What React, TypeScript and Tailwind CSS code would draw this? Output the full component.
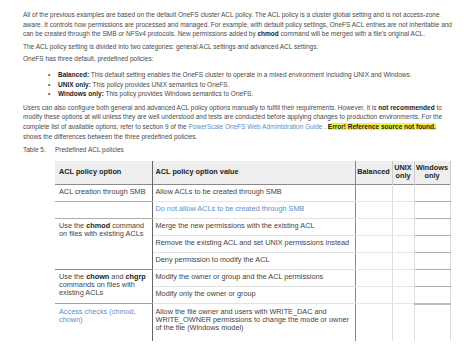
import React from "react";

const F = { fontFamily: '"Liberation Sans", Arial, sans-serif' };

function Cell({ children, className = "" }: { children?: React.ReactNode; className?: string }) {
  return <td className={`align-top p-0 ${className}`}>{children}</td>;
}

export default function App() {
  const sub = "h-[17px]";
  return (
    <div className="w-[474px] h-[355px] overflow-hidden bg-white text-[#4a4a4a]" style={F}>
      <div className="pl-[23px] pt-[10px] text-[6.5px] leading-[9.6px]">
        <p className="mb-[3px] whitespace-nowrap">
          All of the previous examples are based on the default OneFS cluster ACL policy. The ACL policy is a cluster global setting and is not access-zone
          <br />
          aware. It controls how permissions are processed and managed. For example, with default policy settings, OneFS ACL entries are not inheritable and
          <br />
          can be created through the SMB or NFSv4 protocols. New permissions added by <b className="text-[#222]">chmod</b> command will be merged with a file’s original ACL.
        </p>
        <p className="mb-[3px] whitespace-nowrap">
          The ACL policy setting is divided into two categories: general ACL settings and advanced ACL settings.
        </p>
        <p className="whitespace-nowrap">OneFS has three default, predefined policies:</p>
        <ul className="mt-[6px] mb-[4px] whitespace-nowrap">
          {[
            ["Balanced:", " This default setting enables the OneFS cluster to operate in a mixed environment including UNIX and Windows."],
            ["UNIX only:", " This policy provides UNIX semantics to OneFS."],
            ["Windows only:", " This policy provides Windows semantics to OneFS."],
          ].map(([b, t]) => (
            <li key={b} className="flex">
              <span className="w-[35px] pl-[25px] shrink-0">•</span>
              <span>
                <b className="text-[#222]">{b}</b>
                {t}
              </span>
            </li>
          ))}
        </ul>
        <p className="whitespace-nowrap">
          Users can also configure both general and advanced ACL policy options manually to fulfill their requirements. However, it is <b className="text-[#222]">not recommended</b> to
          <br />
          modify these options at will unless they are well understood and tests are conducted before applying changes to production environments. For the
          <br />
          complete list of available options, refer to section 9 of the <span className="text-[#5b8fc7]">PowerScale OneFS Web Administration Guide</span> .{" "}
          <b className="bg-[#eef53e] text-[#222]">Error! Reference source not found.</b>
          <br />
          shows the differences between the three predefined policies.
        </p>
        <div className="mt-[4px] flex whitespace-nowrap">
          <span className="w-[32px]">Table 5.</span>
          <span>Predefined ACL policies</span>
        </div>
      </div>

      <div className="pl-[55px] mt-[6px]">
        <table className="table-fixed border-collapse text-[7.3px] leading-[8px] text-[#444]" style={{ width: 395 }}>
          <colgroup>
            <col style={{ width: 97 }} />
            <col style={{ width: 203 }} />
            <col style={{ width: 37 }} />
            <col style={{ width: 22 }} />
            <col style={{ width: 36 }} />
          </colgroup>
          <thead>
            <tr className="h-[24px] bg-[#eeeeee] text-[#222] font-bold border-b-[1.5px] border-b-[#8a8a8a]">
              <th className="text-left align-middle pl-[4px] border-r border-r-[#666]">ACL policy option</th>
              <th className="text-left align-middle pl-[3px] border-r border-r-[#888]">ACL policy option value</th>
              <th className="align-middle border-r border-r-[#ccc]">Balanced</th>
              <th className="align-middle border-r border-r-[#ccc]">UNIX<br />only</th>
              <th className="align-middle border-r border-r-[#ccc]">Windows<br />only</th>
            </tr>
          </thead>
          <tbody>
            {/* Row 1 */}
            <tr className={sub}>
              <Cell className="pl-[4px] pt-[3px] border-r border-r-[#666] border-b border-b-[#aaa]" >ACL creation through SMB</Cell>
              <Cell className="pl-[3px] pt-[3px] border-b border-b-[#e2e2e2] border-r border-r-[#888]">Allow ACLs to be created through SMB</Cell>
              <Cell className="border-b border-b-[#e6e6e6] border-r border-r-[#ddd]" />
              <Cell className="border-b border-b-[#e6e6e6] border-r border-r-[#ddd]" />
              <Cell className="border-b-[1.5px] border-b-[#aaa] border-r border-r-[#ddd]" />
            </tr>
            <tr className={sub}>
              <Cell className="pl-[4px] border-r border-r-[#666] border-b border-b-[#aaa]" />
              <Cell className="pl-[3px] pt-[3px] text-[#5b8fc7] border-b border-b-[#e2e2e2] border-r border-r-[#888]">Do not allow ACLs to be created through SMB</Cell>
              <Cell className="border-b border-b-[#e6e6e6] border-r border-r-[#ddd]" />
              <Cell className="border-b border-b-[#e6e6e6] border-r border-r-[#ddd]" />
              <Cell className="border-b-[1.5px] border-b-[#aaa] border-r border-r-[#ddd]" />
            </tr>
            {/* Row 2 */}
            <tr className={sub}>
              <td rowSpan={3} className="align-top p-0 pl-[4px] pt-[3px] border-r border-r-[#666] border-b border-b-[#888]">
                Use the <b className="text-[#222]">chmod</b> command
                <br />
                on files with existing ACLs
              </td>
              <Cell className="pl-[3px] pt-[3px] border-b border-b-[#e2e2e2] border-r border-r-[#888]">Merge the new permissions with the existing ACL</Cell>
              <Cell className="border-b border-b-[#e6e6e6] border-r border-r-[#ddd]" />
              <Cell className="border-b border-b-[#e6e6e6] border-r border-r-[#ddd]" />
              <Cell className="border-b-[1.5px] border-b-[#aaa] border-r border-r-[#ddd]" />
            </tr>
            <tr className={sub}>
              <Cell className="pl-[3px] pt-[3px] border-b border-b-[#e2e2e2] border-r border-r-[#888]">Remove the existing ACL and set UNIX permissions instead</Cell>
              <Cell className="border-b border-b-[#e6e6e6] border-r border-r-[#ddd]" />
              <Cell className="border-b border-b-[#e6e6e6] border-r border-r-[#ddd]" />
              <Cell className="border-b-[1.5px] border-b-[#aaa] border-r border-r-[#ddd]" />
            </tr>
            <tr className={sub}>
              <Cell className="pl-[3px] pt-[3px] border-b border-b-[#e2e2e2] border-r border-r-[#888]">Deny permission to modify the ACL</Cell>
              <Cell className="border-b border-b-[#e6e6e6] border-r border-r-[#ddd]" />
              <Cell className="border-b border-b-[#e6e6e6] border-r border-r-[#ddd]" />
              <Cell className="border-b-[1.5px] border-b-[#aaa] border-r border-r-[#ddd]" />
            </tr>
            {/* Row 3 */}
            <tr className={sub}>
              <td rowSpan={2} className="align-top p-0 pl-[4px] pt-[3px] border-r border-r-[#666] border-b border-b-[#9aa4b0]">
                Use the <b className="text-[#222]">chown</b> and <b className="text-[#222]">chgrp</b>
                <br />
                commands on files with
                <br />
                existing ACLs
              </td>
              <Cell className="pl-[3px] pt-[3px] border-b border-b-[#e2e2e2] border-r border-r-[#888]">Modify the owner or group and the ACL permissions</Cell>
              <Cell className="border-b border-b-[#e6e6e6] border-r border-r-[#ddd]" />
              <Cell className="border-b border-b-[#e6e6e6] border-r border-r-[#ddd]" />
              <Cell className="border-b-[1.5px] border-b-[#aaa] border-r border-r-[#ddd]" />
            </tr>
            <tr className={sub}>
              <Cell className="pl-[3px] pt-[3px] border-b border-b-[#e2e2e2] border-r border-r-[#888]">Modify only the owner or group</Cell>
              <Cell className="border-b border-b-[#e6e6e6] border-r border-r-[#ddd]" />
              <Cell className="border-b border-b-[#e6e6e6] border-r border-r-[#ddd]" />
              <Cell className="border-b-[2px] border-b-[#bbb] border-r border-r-[#ddd]" />
            </tr>
            {/* Row 4 */}
            <tr className="h-[37px]">
              <Cell className="pl-[4px] pt-[4px] text-[#5b8fc7] border-r border-r-[#666]">
                Access checks (chmod,
                <br />
                chown)
              </Cell>
              <Cell className="pl-[3px] pt-[4px] border-r border-r-[#888]">
                Allow the file owner and users with WRITE_DAC and
                <br />
                WRITE_OWNER permissions to change the mode or owner
                <br />
                of the file (Windows model)
              </Cell>
              <Cell className="border-r border-r-[#ddd]" />
              <Cell className="border-r border-r-[#ddd]" />
              <Cell className="border-r border-r-[#ddd]" />
            </tr>
          </tbody>
        </table>
      </div>
    </div>
  );
}
